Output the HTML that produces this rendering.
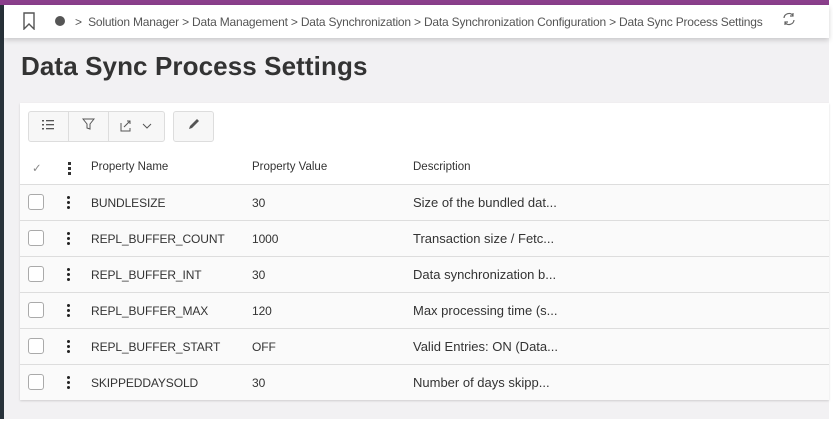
<!DOCTYPE html>
<html><head><style>
*{box-sizing:border-box;margin:0;padding:0}
body{width:833px;height:424px;background:#fff;font-family:"Liberation Sans",sans-serif;position:relative;overflow:hidden;color:#333}
.top{position:absolute;left:0;top:0;width:829px;height:5px;background:#8b3f8c}
.left{position:absolute;left:0;top:5px;width:4px;height:414px;background:#28323a}
.page{position:absolute;left:4px;top:5px;width:825px;height:414px;background:#f2f1f3}
.bc{position:absolute;left:4px;top:5px;width:825px;height:33px;background:#fff;box-shadow:0 2px 5px rgba(0,0,0,.18);font-size:12px;color:#555}
.bc span{position:absolute;top:10px;left:71px;white-space:nowrap;letter-spacing:-.2px}
h1{position:absolute;left:21px;top:51px;font-size:26px;font-weight:bold;color:#333;letter-spacing:.1px}
.card{position:absolute;left:20px;top:103px;width:809px;height:297px;background:#fff;box-shadow:0 1px 2px rgba(0,0,0,.15)}
.tb{position:absolute;top:111px;height:31px;border:1px solid #ddd;border-radius:3px;background:#f7f7f7}
.hd{position:absolute;top:161px;font-size:11.5px;color:#333}
.row{position:absolute;left:20px;width:809px;height:36px;background:#fafafa;border-top:1px solid #ddd;font-size:13px}
.row div{position:absolute;top:10px}
.row .nm{font-size:12px;top:11px;letter-spacing:-.1px}
.cb{left:8px;top:9px!important;width:16px;height:16px;border:1px solid #aaa;border-radius:3px;background:#fff}
.dots{left:47px;top:11px!important;width:3px}
.dots i{display:block;width:3px;height:3px;background:#222;border-radius:50%;margin-bottom:2px}
</style></head><body>
<div class="page"></div><div class="top"></div><div class="left"></div>
<div class="bc">
<svg style="position:absolute;left:18px;top:7px" width="14" height="18" viewBox="0 0 14 18"><path d="M2 1h10v16l-5-5-5 5z" fill="none" stroke="#555" stroke-width="1.4"/></svg>
<div style="position:absolute;left:51px;top:11px;width:10px;height:10px;border-radius:50%;background:#555"></div>
<span>&gt;&nbsp; Solution Manager &gt; Data Management &gt; Data Synchronization &gt; Data Synchronization Configuration &gt; Data Sync Process Settings</span>
<svg style="position:absolute;left:778px;top:7px" width="14" height="14" viewBox="0 0 14 14"><path d="M2 6A5 5 0 0 1 11 3.5M12 8A5 5 0 0 1 3 10.5M11 1v3h-3M3 13v-3h3" fill="none" stroke="#666" stroke-width="1.2"/></svg>
</div>
<h1>Data Sync Process Settings</h1>
<div class="card"></div>
<div class="tb" style="left:28px;width:137px"></div>
<div style="position:absolute;left:68px;top:112px;width:1px;height:29px;background:#ddd"></div>
<div style="position:absolute;left:108px;top:112px;width:1px;height:29px;background:#ddd"></div>
<div class="tb" style="left:173px;width:41px"></div>
<svg style="position:absolute;left:41px;top:119px" width="14" height="12"><g fill="#555"><rect x="1" y="1" width="2" height="1.5"/><rect x="1" y="5" width="2" height="1.5"/><rect x="1" y="9" width="2" height="1.5"/><rect x="5" y="1" width="8" height="1.3"/><rect x="5" y="5" width="8" height="1.3"/><rect x="5" y="9" width="8" height="1.3"/></g></svg>
<svg style="position:absolute;left:82px;top:118px" width="13" height="13"><path d="M1 1h11l-4 5v5l-3-1v-4z" fill="none" stroke="#555"/></svg>
<svg style="position:absolute;left:120px;top:119px" width="36" height="14"><path d="M1 4v8h9v-3M4 8l6-6M7 2h3v3" fill="none" stroke="#555"/><path d="M23 5l4 4 4-4" fill="none" stroke="#555"/></svg>
<svg style="position:absolute;left:188px;top:118px" width="12" height="12"><path d="M1 11l1-3 7-7 2 2-7 7z" fill="#555"/></svg>
<div class="hd" style="left:32px;color:#888">✓</div>
<div style="position:absolute;left:68px;top:162px"><div style="width:3px;height:3px;background:#333;margin-bottom:2px"></div><div style="width:3px;height:3px;background:#333;margin-bottom:2px"></div><div style="width:3px;height:3px;background:#333"></div></div>
<div class="hd" style="left:91px">Property Name</div>
<div class="hd" style="left:252px">Property Value</div>
<div class="hd" style="left:413px">Description</div>
<div class="row" style="top:184px"><div class="cb"></div><div class="dots"><i></i><i></i><i></i></div><div class="nm" style="left:71px">BUNDLESIZE</div><div class="nm" style="left:232px">30</div><div style="left:393px">Size of the bundled dat...</div></div>
<div class="row" style="top:220px"><div class="cb"></div><div class="dots"><i></i><i></i><i></i></div><div class="nm" style="left:71px">REPL_BUFFER_COUNT</div><div class="nm" style="left:232px">1000</div><div style="left:393px">Transaction size / Fetc...</div></div>
<div class="row" style="top:256px"><div class="cb"></div><div class="dots"><i></i><i></i><i></i></div><div class="nm" style="left:71px">REPL_BUFFER_INT</div><div class="nm" style="left:232px">30</div><div style="left:393px">Data synchronization b...</div></div>
<div class="row" style="top:292px"><div class="cb"></div><div class="dots"><i></i><i></i><i></i></div><div class="nm" style="left:71px">REPL_BUFFER_MAX</div><div class="nm" style="left:232px">120</div><div style="left:393px">Max processing time (s...</div></div>
<div class="row" style="top:328px"><div class="cb"></div><div class="dots"><i></i><i></i><i></i></div><div class="nm" style="left:71px">REPL_BUFFER_START</div><div class="nm" style="left:232px">OFF</div><div style="left:393px">Valid Entries: ON (Data...</div></div>
<div class="row" style="top:364px"><div class="cb"></div><div class="dots"><i></i><i></i><i></i></div><div class="nm" style="left:71px">SKIPPEDDAYSOLD</div><div class="nm" style="left:232px">30</div><div style="left:393px">Number of days skipp...</div></div>
</body></html>
